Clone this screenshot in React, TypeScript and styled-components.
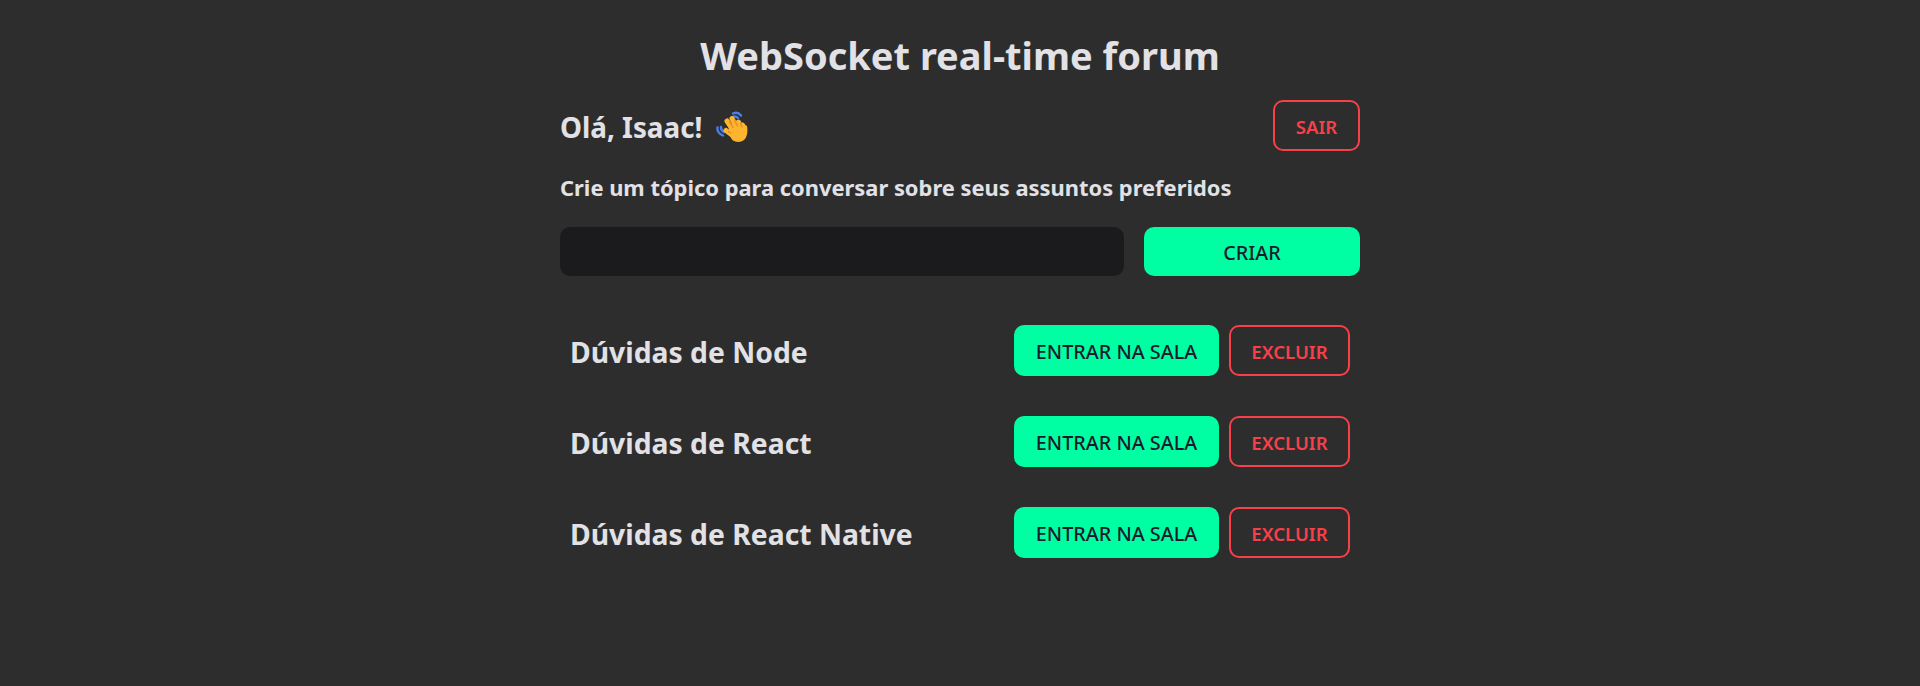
import { createGlobalStyle } from 'styled-components';
import styled from 'styled-components';

const GlobalStyle = createGlobalStyle`
  * {
    box-sizing: border-box;
  }

  body {
    margin: 0;
    min-height: 100vh;
    background: #2d2d2d;
    color: #e1e1e6;
    font-family: 'Noto Sans', 'Open Sans', sans-serif;
  }
`;

const Page = styled.main`
  width: 800px;
  margin: 0 auto;
  padding-top: 29px;
`;

const Title = styled.h1`
  margin: 0 0 19px;
  height: 52px;
  font-size: 38px;
  line-height: 52px;
  font-weight: 700;
  text-align: center;
`;

const Greeting = styled.div`
  display: flex;
  align-items: center;
  justify-content: space-between;
`;

const Hello = styled.h2`
  display: flex;
  align-items: center;
  gap: 14px;
  margin: 0;
  padding-top: 2px;
  font-size: 27.8px;
  font-weight: 700;
`;

const Lead = styled.p`
  margin: 22px 0 24px;
  height: 30px;
  font-size: 21.9px;
  line-height: 30px;
  font-weight: 700;
`;

const Form = styled.form`
  display: flex;
  gap: 20px;
  margin-bottom: 49px;
`;

const Input = styled.input`
  flex: 1;
  height: 49px;
  border: 0;
  border-radius: 10px;
  background: #1b1a1d;
`;

const Button = styled.button<{ $outline?: boolean; $width: number; $height?: number }>`
  width: ${p => p.$width}px;
  height: ${p => p.$height ?? 51}px;
  padding: 2px 0 0;
  border-radius: 10px;
  border: ${p => (p.$outline ? '2px solid #f7404a' : '0')};
  background: ${p => (p.$outline ? 'transparent' : '#00ffa3')};
  color: ${p => (p.$outline ? '#f7404a' : '#1c1b2e')};
  font-family: inherit;
  font-size: ${p => (p.$outline ? 18.6 : 19.8)}px;
  font-weight: ${p => (p.$outline ? 600 : 500)};
`;

const Topics = styled.ul`
  display: flex;
  flex-direction: column;
  gap: 40px;
  margin: 0;
  padding: 0 10px;
  list-style: none;
`;

const Topic = styled.li`
  display: flex;
  align-items: center;
  justify-content: space-between;
`;

const TopicName = styled.h3`
  margin: 0;
  padding-top: 2px;
  font-size: 28.3px;
  font-weight: 700;
`;

const Actions = styled.div`
  display: flex;
  gap: 10px;
`;

const WaveIcon = () => (
  <svg width="33" height="32" viewBox="0 0 33 32" aria-hidden="true">
    <path d="M17 2.500c3-1.500 6-.5 8 2M16.500 6c2-1 4-.5 5.500 1" fill="none" stroke="#4a80ea" strokeWidth="2.400" strokeLinecap="round" />
    <path d="M1.500 16.500c-.5 3 1.500 6.500 5.500 8M5 16c0 2 1 4 3 5" fill="none" stroke="#4a80ea" strokeWidth="2.400" strokeLinecap="round" />
    <g fill="none" stroke="#fdb52f" strokeWidth="5" strokeLinecap="round">
      <path d="M17 19L11 10" />
      <path d="M21 17L16 7.500" />
      <path d="M25 17L22.500 11" />
      <path d="M28 19L26.500 14" />
      <path d="M16 24L10 19.500" />
    </g>
    <path d="M13 15c4-3 12-4 18 0 1 6 0 11-3 14-3 2.500-8 2.500-11 .5-3-2.500-5-9-4-14.500z" fill="#fdb52f" />
    <path d="M13.500 11l3.500 5.500M18.500 9l3 6M24.500 12l1.500 4M14.500 22l-2-1.500" fill="none" stroke="#e58a21" strokeWidth="1.300" strokeLinecap="round" />
  </svg>
);

const topics = ['Dúvidas de Node', 'Dúvidas de React', 'Dúvidas de React Native'];

const App = () => {
  return (
    <>
      <GlobalStyle />
      <Page>
        <Title>WebSocket real-time forum</Title>
        <Greeting>
          <Hello>
            Olá, Isaac!
            <WaveIcon />
          </Hello>
          <Button $outline $width={87}>SAIR</Button>
        </Greeting>
        <Lead>Crie um tópico para conversar sobre seus assuntos preferidos</Lead>
        <Form>
          <Input />
          <Button type="button" $width={216} $height={49}>CRIAR</Button>
        </Form>
        <Topics>
          {topics.map(name => (
            <Topic key={name}>
              <TopicName>{name}</TopicName>
              <Actions>
                <Button $width={205}>ENTRAR NA SALA</Button>
                <Button $outline $width={121}>EXCLUIR</Button>
              </Actions>
            </Topic>
          ))}
        </Topics>
      </Page>
    </>
  );
};

export default App;
